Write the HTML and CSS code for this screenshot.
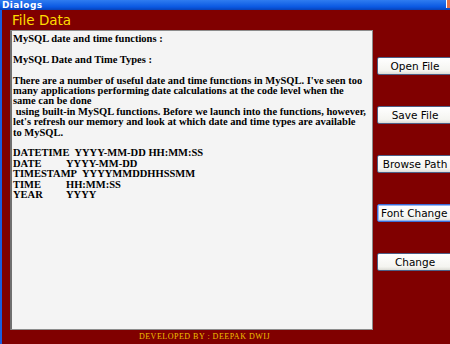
FILE: index.html
```html
<!DOCTYPE html>
<html lang="en">
<head>
    <meta charset="UTF-8">
    <meta name="viewport" content="width=device-width, initial-scale=1.0">
    <title>Dialogs</title>
    <link rel="stylesheet" href="styles.css">
</head>
<body>
    <div class="window">
        <div class="titlebar">
            <span class="title">Dialogs</span>
            <span class="close-btn"></span>
        </div>
        <div class="frame">
            <div class="main">
                <h1 class="heading">File Data</h1>
                <div class="file-text">
<p>MySQL date and time functions :</p>
<p>MySQL Date and Time Types :</p>
<p>There are a number of useful date and time functions in MySQL. I've seen too<br>many applications performing date calculations at the code level when the<br>same can be done<br>&nbsp;using built-in MySQL functions. Before we launch into the functions, however,<br>let's refresh our memory and look at which date and time types are available<br>to MySQL.</p>
<div class="types">
    <div class="type-row"><span class="type-name wide">DATETIME</span>YYYY-MM-DD HH:MM:SS</div>
    <div class="type-row"><span class="type-name">DATE</span>YYYY-MM-DD</div>
    <div class="type-row"><span class="type-name wide">TIMESTAMP</span>YYYYMMDDHHSSMM</div>
    <div class="type-row"><span class="type-name">TIME</span>HH:MM:SS</div>
    <div class="type-row"><span class="type-name">YEAR</span>YYYY</div>
</div>
                </div>
                <div class="footer">DEVELOPED BY : DEEPAK DWIJ</div>
            </div>
            <div class="side">
                <button type="button">Open File</button>
                <button type="button">Save File</button>
                <button type="button">Browse Path</button>
                <button type="button" class="focused">Font Change</button>
                <button type="button">Change</button>
            </div>
        </div>
    </div>
</body>
</html>
```
FILE: styles.css
```css
html, body {
    margin: 0;
    padding: 0;
}
body {
    width: 450px;
    height: 344px;
    overflow: hidden;
    background-color: #800000;
}
.window {
    display: flex;
    flex-direction: column;
    width: 450px;
    height: 344px;
}
.titlebar {
    height: 10px;
    display: flex;
    justify-content: space-between;
    align-items: flex-start;
    background: linear-gradient(#2f7cf0, #0a58e2 70%, #0842b8);
    flex-shrink: 0;
}
.title {
    font-family: "DejaVu Sans", sans-serif;
    font-weight: bold;
    font-size: 9px;
    line-height: 10px;
    color: #ffffff;
    padding-left: 2px;
    letter-spacing: 0.4px;
}
.close-btn {
    width: 3px;
    height: 8px;
    background-color: #e2704a;
    border-left: 1px solid #ffffff;
}
.frame {
    flex: 1;
    display: flex;
    border-left: 2px solid #1a5fe0;
    background-color: #800000;
    min-height: 0;
}
.main {
    display: flex;
    flex-direction: column;
    padding-left: 8px;
    width: 363px;
    flex-shrink: 0;
}
.heading {
    margin: 0;
    height: 20px;
    font-family: "DejaVu Sans", sans-serif;
    font-weight: normal;
    font-size: 13.5px;
    line-height: 21px;
    color: #ffdc00;
    padding-left: 2px;
}
.file-text {
    height: 295px;
    background-color: #f4f4f4;
    border: 1px solid #8c8c8c;
    border-left: 2px solid #707070;
    padding: 3px 0 0 1px;
    font-family: "Liberation Serif", serif;
    font-weight: bold;
    font-size: 10.5px;
    line-height: 10.4px;
    color: #000000;
    overflow: hidden;
}
.file-text p {
    margin: 0 0 10.4px 0;
}
.type-row {
    white-space: nowrap;
}
.type-name {
    display: inline-block;
    min-width: 53px;
}
.type-name.wide {
    margin-right: 5px;
}
.footer {
    flex: 1;
    font-family: "Liberation Serif", serif;
    font-size: 8px;
    line-height: 13px;
    letter-spacing: 0.5px;
    color: #f0c000;
    text-align: center;
    padding-left: 26px;
}
.side {
    display: flex;
    flex-direction: column;
    gap: 31px;
    padding-top: 47px;
    padding-left: 4px;
}
button {
    width: 76px;
    height: 18px;
    padding: 0;
    font-family: "DejaVu Sans", sans-serif;
    font-size: 10.5px;
    color: #000000;
    background: linear-gradient(#ffffff, #f4f4f0 80%, #dcdcd6);
    border: 1px solid #4d5f86;
    border-radius: 2px;
    white-space: nowrap;
    cursor: pointer;
}
button.focused {
    border-color: #3c6ed8;
    box-shadow: inset 0 0 0 1px #9ab8f0;
    text-align: left;
    padding-left: 3px;
}
```
